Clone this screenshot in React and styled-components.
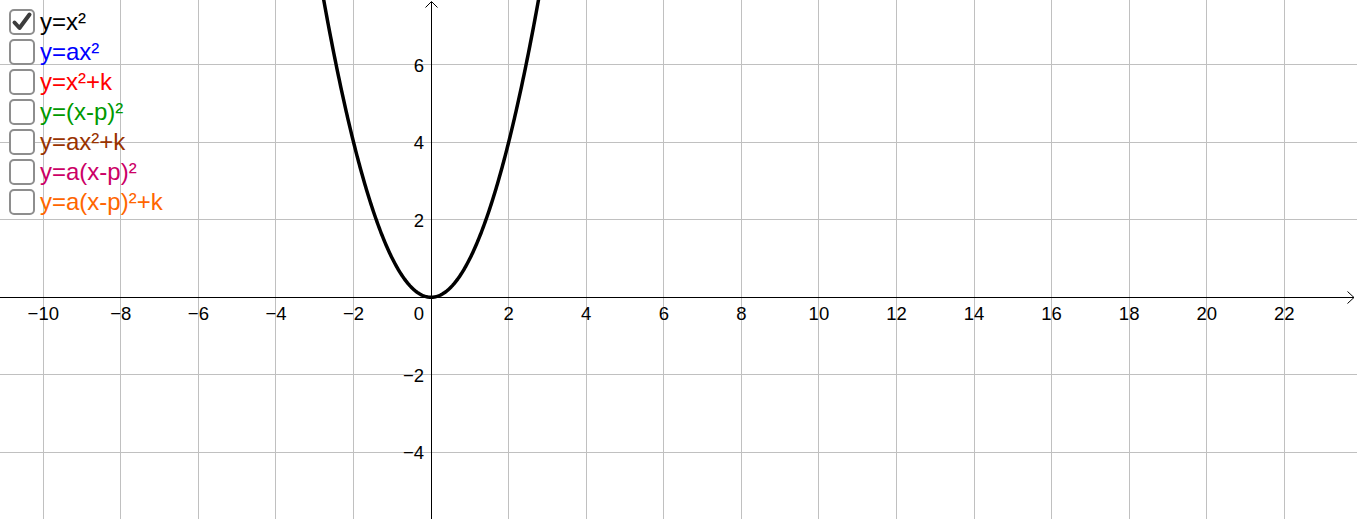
import React from "react";
import styled, { createGlobalStyle } from "styled-components";

const GlobalStyle = createGlobalStyle`
  html, body { margin: 0; padding: 0; background: #ffffff; }
  body { font-family: "Liberation Sans", Arial, sans-serif; }
`;

const W = 1357;
const H = 519;
const U = 38.78;
const OX = 431.1;
const OY = 297.3;

const px = (x) => OX + x * U;
const py = (y) => OY - y * U;
const crisp = (v) => Math.floor(v) + 0.5;

const Canvas = styled.div`
  position: relative;
  width: ${W}px;
  height: ${H}px;
  background: #ffffff;
  overflow: hidden;
`;

const GraphSvg = styled.svg`
  display: block;
  width: ${W}px;
  height: ${H}px;
`;

const GridLine = styled.line`
  stroke: #c0c0c0;
  stroke-width: 1;
  shape-rendering: crispEdges;
`;

const AxisLine = styled.line`
  stroke: #000000;
  stroke-width: 1;
  shape-rendering: crispEdges;
`;

const Arrow = styled.polyline`
  fill: none;
  stroke: #000000;
  stroke-width: 1;
`;

const TickLabel = styled.text`
  font-family: "Liberation Sans", Arial, sans-serif;
  font-size: 18.5px;
  fill: #000000;
`;

const Curve = styled.path`
  fill: none;
  stroke: #000000;
  stroke-width: 3.5;
  stroke-linecap: round;
  stroke-linejoin: round;
`;

const Legend = styled.div`
  position: absolute;
  top: 9px;
  left: 9px;
  display: flex;
  flex-direction: column;
`;

const Row = styled.label`
  display: flex;
  align-items: center;
  gap: 5px;
  height: 30px;
  cursor: pointer;
`;

const Box = styled.span`
  box-sizing: border-box;
  flex: none;
  width: 26px;
  height: 26px;
  border: 2px solid #8e8e8e;
  border-radius: 5px;
  background: #ffffff;
  display: flex;
  align-items: center;
  justify-content: center;
  margin-top: -4px;
`;

const Label = styled.span`
  font-family: "Liberation Sans", Arial, sans-serif;
  font-size: 24px;
  line-height: 30px;
  color: ${(p) => p.$color};
  white-space: nowrap;
  margin-top: -4px;
`;

const items = [
  { text: "y=x²", color: "#000000", checked: true },
  { text: "y=ax²", color: "#0000ff" },
  { text: "y=x²+k", color: "#ff0000" },
  { text: "y=(x-p)²", color: "#009900" },
  { text: "y=ax²+k", color: "#993300" },
  { text: "y=a(x-p)²", color: "#cc0066" },
  { text: "y=a(x-p)²+k", color: "#ff6600" },
];

const xTicks = [];
for (let k = -10; k <= 22; k += 2) xTicks.push(k);
const yTicks = [6, 4, 2, -2, -4];

const minus = (n) => (n < 0 ? "\u2212" + Math.abs(n) : String(n));

function parabola() {
  const pts = [];
  for (let x = -2.95; x <= 2.951; x += 0.02) {
    pts.push(`${px(x).toFixed(2)},${py(x * x).toFixed(2)}`);
  }
  return "M" + pts.join(" L");
}

function Check() {
  return (
    <svg width="22" height="22" viewBox="0 0 22 22">
      <polyline
        points="3.5,11.5 8.5,17 18.5,3.5"
        fill="none"
        stroke="#3c3c3c"
        strokeWidth="4"
        strokeLinecap="round"
        strokeLinejoin="round"
      />
    </svg>
  );
}

export default function App() {
  const axX = crisp(OX);
  const axY = crisp(OY);
  return (
    <>
      <GlobalStyle />
      <Canvas>
        <GraphSvg viewBox={`0 0 ${W} ${H}`}>
          {xTicks.filter((k) => k !== 0).map((k) => (
            <GridLine key={"gx" + k} x1={crisp(px(k))} y1={0} x2={crisp(px(k))} y2={H} />
          ))}
          {yTicks.map((k) => (
            <GridLine key={"gy" + k} x1={0} y1={crisp(py(k))} x2={W} y2={crisp(py(k))} />
          ))}
          <AxisLine x1={0} y1={axY} x2={1354} y2={axY} />
          <AxisLine x1={axX} y1={1.5} x2={axX} y2={H} />
          <Arrow points={`1347.5,${axY - 6} 1354,${axY} 1347.5,${axY + 6}`} />
          <Arrow points={`${axX - 6},7.5 ${axX},1.5 ${axX + 6},7.5`} />
          {xTicks.filter((k) => k !== 0).map((k) => (
            <TickLabel key={"lx" + k} x={px(k)} y={319.5} textAnchor="middle">
              {minus(k)}
            </TickLabel>
          ))}
          <TickLabel x={424} y={319.5} textAnchor="end">0</TickLabel>
          {yTicks.map((k) => (
            <TickLabel key={"ly" + k} x={424} y={py(k) + 7} textAnchor="end">
              {minus(k)}
            </TickLabel>
          ))}
          <Curve d={parabola()} />
        </GraphSvg>
        <Legend>
          {items.map((it) => (
            <Row key={it.text}>
              <Box>{it.checked && <Check />}</Box>
              <Label $color={it.color}>{it.text}</Label>
            </Row>
          ))}
        </Legend>
      </Canvas>
    </>
  );
}
